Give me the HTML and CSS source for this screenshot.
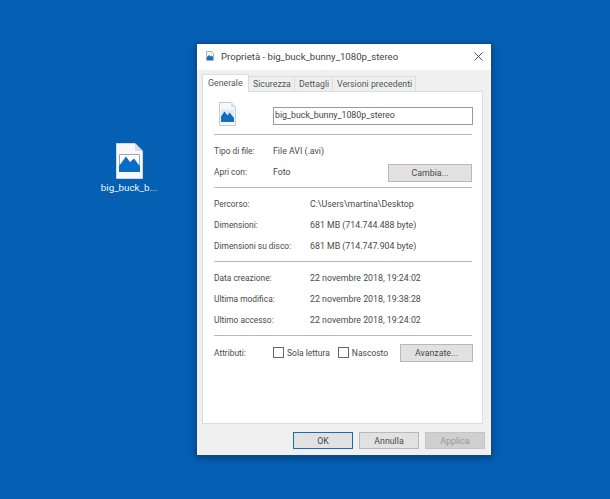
FILE: index.html
```html
<!DOCTYPE html>
<html lang="it">
<head>
<meta charset="utf-8">
<title>Proprietà - big_buck_bunny_1080p_stereo</title>
<link rel="stylesheet" href="styles.css">
</head>
<body>
<div class="desktop">
  <div class="desk-icon">
    <svg class="desk-glyph" viewBox="0 0 27 36" width="27" height="36">
      <path d="M0.500 0.500H19L26.500 8V35.500H0.500Z" fill="#f7f9fb" stroke="#cfd8e0"/>
      <path d="M19 0.500V8H26.500Z" fill="#d5dde4"/>
      <path d="M3.500 28V11.500H23.500V28" fill="#fff" stroke="#9aa5ae"/>
      <path d="M3 29V23L10 13.500L14 19L18 15.500L24 23.500V29Z" fill="#0a6cc4"/>
    </svg>
    <span class="desk-label">big_buck_b...</span>
  </div>

  <div class="window">
    <div class="titlebar">
      <svg class="title-glyph" viewBox="0 0 8 10" width="8" height="10">
        <path d="M0.500 0.500H5.500L7.500 2.500V9.500H0.500Z" fill="#f4f6f8" stroke="#a9b3bb"/>
        <path d="M1 9V6L3 4L4.500 5.500L5.500 4.500L7 6V9Z" fill="#1a6fb8"/>
      </svg>
      <span class="title-text">Proprietà - big_buck_bunny_1080p_stereo</span>
      <svg class="close-glyph" viewBox="0 0 9 9" width="9" height="9">
        <path d="M0.500 0.500L8.500 8.500M8.500 0.500L0.500 8.500" stroke="#444" stroke-width="0.900" fill="none"/>
      </svg>
    </div>
    <div class="content">
      <div class="tabs">
        <span class="tab tab-active">Generale</span>
        <span class="tab tab-sec">Sicurezza</span>
        <span class="tab tab-det">Dettagli</span>
        <span class="tab tab-ver">Versioni precedenti</span>
      </div>
      <div class="panel">
        <div class="name-row">
          <svg class="file-glyph" viewBox="0 0 17 24" width="17" height="24">
            <path d="M0.500 0.500H12L16.500 5V23.500H0.500Z" fill="#f6f8fa" stroke="#c3cbd2"/>
            <path d="M12 0.500V5H16.500Z" fill="#d5dde4"/>
            <rect x="2" y="7.500" width="13" height="12.500" fill="#dfe9f2"/>
            <path d="M2 20V14.500L5.500 9.500L8.500 13.500L10.500 10.500L15 16V20Z" fill="#0f6fc1"/>
          </svg>
          <div class="name-field">big_buck_bunny_1080p_stereo</div>
        </div>
        <hr class="sep">
        <div class="group group-type">
          <div class="row row-a"><span class="label label-a">Tipo di file:</span><span class="value">File AVI (.avi)</span></div>
          <div class="row row-a"><span class="label label-a">Apri con:</span><span class="value value-grow">Foto</span><button class="btn btn-change">Cambia...</button></div>
        </div>
        <hr class="sep">
        <div class="group">
          <div class="row"><span class="label">Percorso:</span><span class="value">C:\Users\martina\Desktop</span></div>
          <div class="row"><span class="label">Dimensioni:</span><span class="value">681 MB (714.744.488 byte)</span></div>
          <div class="row"><span class="label">Dimensioni su disco:</span><span class="value">681 MB (714.747.904 byte)</span></div>
        </div>
        <hr class="sep">
        <div class="group">
          <div class="row"><span class="label">Data creazione:</span><span class="value">22 novembre 2018, 19:24:02</span></div>
          <div class="row"><span class="label">Ultima modifica:</span><span class="value">22 novembre 2018, 19:38:28</span></div>
          <div class="row"><span class="label">Ultimo accesso:</span><span class="value">22 novembre 2018, 19:24:02</span></div>
        </div>
        <hr class="sep">
        <div class="attrs">
          <span class="label label-a">Attributi:</span>
          <span class="check"><span class="box"></span>Sola lettura</span>
          <span class="check check-second"><span class="box"></span>Nascosto</span>
          <button class="btn btn-adv">Avanzate...</button>
        </div>
      </div>
      <div class="footer">
        <button class="btn btn-foot btn-ok">OK</button>
        <button class="btn btn-foot">Annulla</button>
        <button class="btn btn-foot btn-off">Applica</button>
      </div>
    </div>
  </div>
</div>
</body>
</html>
```
FILE: styles.css
```css
* { box-sizing: border-box; }
html, body { margin: 0; padding: 0; }
body {
  width: 610px;
  height: 499px;
  overflow: hidden;
  font-family: Roboto, "Noto Sans", sans-serif;
  font-size: 8.800px;
  color: #4a4a4a;
}
.desktop {
  position: relative;
  width: 610px;
  height: 499px;
  background: #0560b4;
}
.desk-icon {
  position: absolute;
  left: 94px;
  top: 143px;
  width: 70px;
  display: flex;
  flex-direction: column;
  align-items: center;
}
.desk-glyph { display: block; margin-left: 1px; }
.desk-label {
  margin-top: 2px;
  color: #eef6fc;
  font-size: 9.800px;
  line-height: 14px;
  white-space: nowrap;
}
.window {
  position: absolute;
  left: 196px;
  top: 43px;
  width: 296px;
  height: 413px;
  border: 1px solid #0a4a8a;
  background: #f0f0f0;
  box-shadow: 0 2px 7px rgba(0, 30, 70, 0.55);
  display: flex;
  flex-direction: column;
}
.titlebar {
  height: 26px;
  flex: none;
  background: #fff;
  display: flex;
  align-items: center;
  padding: 0 8px 2px 9px;
}
.title-glyph { flex: none; }
.title-text {
  margin-left: 7px;
  flex: 1;
  font-size: 9.600px;
  color: #444;
  white-space: nowrap;
}
.content {
  flex: 1;
  display: flex;
  flex-direction: column;
  padding: 4px 8px 0 5px;
  position: relative;
}
.tabs {
  height: 18px;
  flex: none;
  display: flex;
  align-items: flex-end;
  position: relative;
  z-index: 1;
}
.tab {
  height: 15px;
  margin-bottom: 1px;
  padding-left: 4px;
  line-height: 14px;
  background: #efefef;
  border: 1px solid #dcdcdc;
  border-bottom: 0;
  border-left: 0;
  color: #555;
  white-space: nowrap;
}
.tab-active {
  height: 18px;
  margin-bottom: 0;
  width: 47px;
  padding-left: 5px;
  line-height: 16px;
  background: #fff;
  border: 1px solid #dcdcdc;
  border-bottom: 0;
}
.tab-sec { width: 46px; }
.tab-det { width: 38px; }
.tab-ver { width: 83px; }
.panel {
  width: 281px;
  height: 333px;
  flex: none;
  margin-top: -1px;
  background: #fff;
  border: 1px solid #dcdcdc;
  padding: 0 9px 0 11px;
  display: flex;
  flex-direction: column;
}
.name-row {
  height: 42px;
  flex: none;
  display: flex;
  align-items: center;
  padding-left: 5px;
}
.file-glyph { flex: none; margin-top: 2px; }
.name-field {
  margin-left: 37px;
  margin-top: 6px;
  width: 200px;
  height: 18px;
  border: 1px solid #9a9a9a;
  padding-left: 1px;
  line-height: 15px;
  color: #444;
  white-space: nowrap;
  flex: none;
}
.sep {
  margin: 0;
  border: 0;
  height: 1px;
  width: 258px;
  flex: none;
  background: #b9b9b9;
}
.group {
  flex: none;
  padding: 5px 0 0;
  height: 73px;
}
.group-type { height: 52px; }
.row {
  display: flex;
  align-items: center;
  height: 21px;
}
.label {
  width: 96px;
  flex: none;
  font-size: 8.400px;
  white-space: nowrap;
}
.label-a { width: 59px; }
.value { white-space: nowrap; }
.value-grow { flex: 1; }
.btn {
  font-family: inherit;
  font-size: 8.800px;
  color: #4a4a4a;
  background: #e1e1e1;
  border: 1px solid #b8b8b8;
  padding: 0;
  flex: none;
}
.btn-change { width: 84px; height: 18px; margin-right: 1px; margin-top: 3px; }
.attrs {
  flex: none;
  height: 33px;
  display: flex;
  align-items: center;
}
.check { display: flex; align-items: center; white-space: nowrap; font-size: 8.500px; }
.check-second { margin-left: 8px; }
.box {
  width: 11px;
  height: 11px;
  border: 1px solid #666;
  background: #fff;
  margin-right: 3px;
}
.btn-adv { width: 73px; height: 18px; margin-left: auto; }
.footer {
  flex: 1;
  display: flex;
  justify-content: flex-end;
  gap: 6px;
  padding-top: 8px;
  margin-right: -2px;
}
.btn-foot { width: 60px; height: 17px; }
.btn-ok { border: 1px solid #1a6cb5; }
.btn-off { color: #999; background: #cfcfcf; border-color: #c4c4c4; }
```
